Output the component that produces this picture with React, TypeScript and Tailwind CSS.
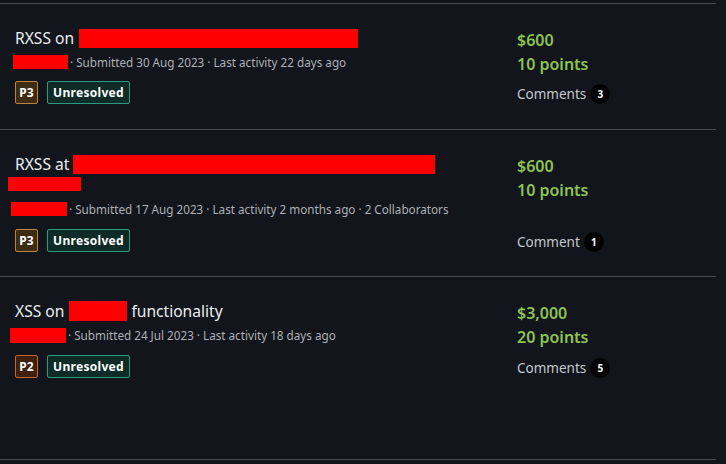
import React from "react";

type Row = {
  title: React.ReactNode;
  meta: React.ReactNode;
  prio: "P2" | "P3";
  amount: string;
  points: string;
  commentLabel: string;
  count: number;
  metaMt: string;
  badgeMt: string;
  pb: string;
};

const Red = ({ w, h, className = "" }: { w: string; h: string; className?: string }) => (
  <span className={`inline-block bg-[#ff0000] align-middle ${w} ${h} ${className}`} />
);

const rows: Row[] = [
  {
    title: (
      <span className="flex h-[20px] items-center">
        <span>RXSS on</span>
        <Red w="w-[279px]" h="h-[19px]" className="ml-[5px]" />
      </span>
    ),
    meta: (
      <span className="flex items-center">
        <Red w="w-[55px]" h="h-[14px]" className="-ml-[2px]" />
        <span className="ml-[2px]">· Submitted 30 Aug 2023 · Last activity 22 days ago</span>
      </span>
    ),
    prio: "P3",
    amount: "$600",
    points: "10 points",
    commentLabel: "Comments",
    count: 3,
    metaMt: "mt-[6px]",
    badgeMt: "mt-[11px]",
    pb: "pb-[25px]",
  },
  {
    title: (
      <span className="flex flex-col">
        <span className="flex h-[20px] items-center">
          <span>RXSS at</span>
          <Red w="w-[362px]" h="h-[19px]" className="ml-[4px]" />
        </span>
        <span className="relative flex h-[20px] items-start">
          <span className="absolute left-[-7px] top-[3px] h-[14px] w-[73px] bg-[#ff0000]" />
        </span>
      </span>
    ),
    meta: (
      <span className="flex items-center">
        <Red w="w-[56px]" h="h-[14px]" className="-ml-[4px]" />
        <span className="ml-[2px]">· Submitted 17 Aug 2023 · Last activity 2 months ago · 2 Collaborators</span>
      </span>
    ),
    prio: "P3",
    amount: "$600",
    points: "10 points",
    commentLabel: "Comment",
    count: 1,
    metaMt: "mt-[7px]",
    badgeMt: "mt-[12px]",
    pb: "pb-[24px]",
  },
  {
    title: (
      <span className="flex h-[20px] items-center">
        <span>XSS on</span>
        <Red w="w-[58px]" h="h-[20px]" className="ml-[5px]" />
        <span className="ml-[4px]">functionality</span>
      </span>
    ),
    meta: (
      <span className="flex items-center">
        <Red w="w-[56px]" h="h-[15px]" className="-ml-[5px]" />
        <span className="ml-[2px]">· Submitted 24 Jul 2023 · Last activity 18 days ago</span>
      </span>
    ),
    prio: "P2",
    amount: "$3,000",
    points: "20 points",
    commentLabel: "Comments",
    count: 5,
    metaMt: "mt-[6px]",
    badgeMt: "mt-[12px]",
    pb: "pb-[81px]",
  },
];

export default function App() {
  return (
    <div
      className="w-[726px] h-[464px] bg-[#12151c] pt-[3px] overflow-hidden"
      style={{ fontFamily: '"Noto Sans", "Open Sans", sans-serif' }}
    >
      <div className="w-[716px] border-t border-[#4a4d52]">
        {rows.map((r, i) => (
          <div
            key={i}
            className={`grid grid-cols-[502px_199px] pl-[15px] pt-[24px] border-b border-[#4a4d52] ${r.pb}`}
          >
            <div className="flex flex-col">
              <div className="text-[15.6px] leading-[20px] text-[#eceef0]">{r.title}</div>
              <div className={`${r.metaMt} text-[11.7px] leading-[16px] text-[#adb0b5]`}>{r.meta}</div>
              <div className={`${r.badgeMt} flex items-center gap-[9px]`}>
                <span
                  className={`flex h-[23px] w-[23px] items-center justify-center rounded-[2px] border text-[12px] font-bold text-white ${
                    r.prio === "P3"
                      ? "border-[#b9843f] bg-[#3d2c13]"
                      : "border-[#c7672c] bg-[#3f1f0e]"
                  }`}
                >
                  {r.prio}
                </span>
                <span className="flex h-[23px] w-[83px] items-center justify-center rounded-[2px] border border-[#2b9b80] bg-[#0e2b27] text-[12px] font-bold tracking-[0.3px] text-white">
                  Unresolved
                </span>
              </div>
            </div>
            <div className="flex flex-col justify-between">
              <div className="text-[16px] font-semibold leading-[24px] text-[#8dc252]">
                <div>{r.amount}</div>
                <div>{r.points}</div>
              </div>
              <div className="flex h-[20px] items-center gap-[4px] text-[13.5px] text-[#c5c8cc]">
                <span>{r.commentLabel}</span>
                <span className="flex h-[20px] w-[20px] items-center justify-center rounded-full bg-black text-[10px] font-bold text-white">
                  {r.count}
                </span>
              </div>
            </div>
          </div>
        ))}
      </div>
    </div>
  );
}
